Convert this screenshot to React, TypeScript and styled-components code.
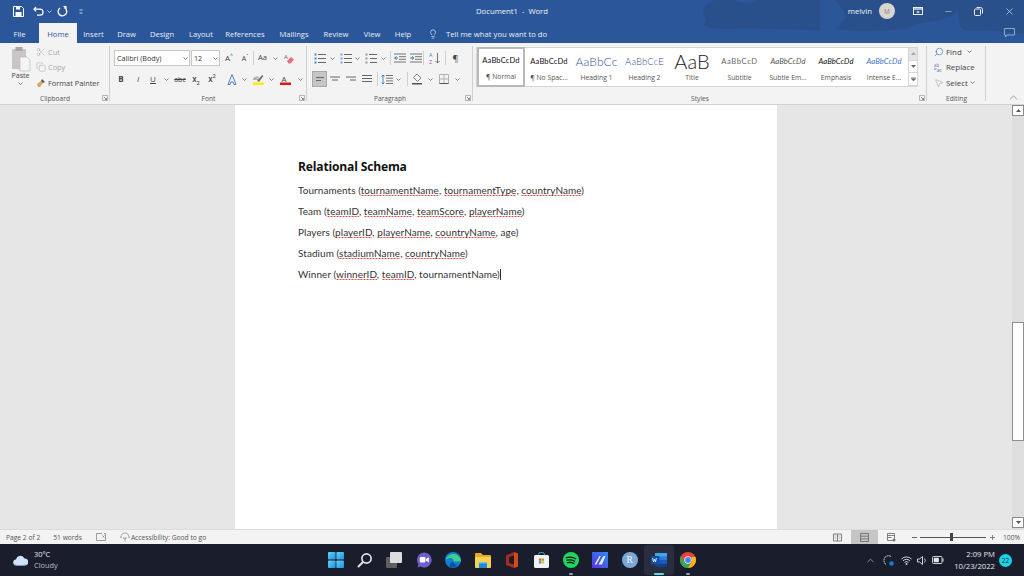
import React from "react";
import styled, { createGlobalStyle } from "styled-components";
import { Scissors, Copy, Search, Lightbulb, ChevronUp, X, Minus, MousePointer2 } from "lucide-react";

const Global = createGlobalStyle`
  html, body { margin: 0; padding: 0; width: 1024px; height: 576px; overflow: hidden; background: #e6e6e6; }
  * { box-sizing: border-box; }
  #root { width: 1024px; height: 576px; }
  svg { display: block; flex: none; }
`;
const Page = styled.div`
  width: 1024px; height: 576px; display: flex; flex-direction: column;
  font-family: "Open Sans", "Liberation Sans", sans-serif; color: #444;
`;
const Head = styled.header`
  position: relative; height: 43px; background: #2b579a; display: flex; flex-direction: column; flex: none; overflow: hidden;
`;
const Watermark = styled.svg`
  position: absolute; left: 0; top: 0; width: 1024px; height: 43px;
`;
const TitleBar = styled.div`
  position: relative; height: 22px; display: flex; align-items: center; color: #fff; flex: none;
`;
const Qat = styled.div`
  display: flex; align-items: center; width: 424px; padding-left: 12px;
`;
const Slot = styled.span<{ $w: number; $h?: number }>`
  width: ${p => p.$w}px; height: ${p => p.$h ?? 14}px; display: flex; align-items: center; justify-content: center; flex: none;
`;
const DocTitle = styled.div`
  width: 176px; text-align: center; font-size: 7.7px; color: #f0f3f8;
`;
const WinControls = styled.div`
  margin-left: auto; display: flex; align-items: center; height: 22px;
`;
const UserName = styled.span`
  font-size: 7.8px; color: #f0f3f8; margin-right: 7px;
`;
const Avatar = styled.span`
  width: 16px; height: 16px; border-radius: 50%; background: #d9d6d0; color: #7b8a80; font-size: 6.5px;
  display: flex; align-items: center; justify-content: center; margin-right: 17px;
`;
const TabRow = styled.nav`
  position: relative; height: 21px; display: flex; align-items: flex-end; flex: none;
`;
const Tab = styled.span<{ $w: number; $active?: boolean }>`
  width: ${p => p.$w}px; height: 20px; display: flex; align-items: center; justify-content: center;
  font-size: 7.6px; color: ${p => (p.$active ? "#2b579a" : "#e8edf5")};
  background: ${p => (p.$active ? "#f3f3f3" : "transparent")}; flex: none; padding-top: 2px;
`;
const TellMe = styled.span`
  display: flex; align-items: center; gap: 8px; font-size: 7.7px; color: #e8edf5; margin-left: 13px; height: 20px; padding-top: 2px;
`;
const CommentSlot = styled.span`
  margin-left: auto; margin-right: 9px; height: 20px; display: flex; align-items: center;
`;
const Ribbon = styled.section`
  height: 62px; background: #f3f3f3; border-bottom: 1px solid #d2d2d2; display: flex; flex: none; padding-top: 3px; position: relative;
`;
const Group = styled.div<{ $w: number }>`
  width: ${p => p.$w}px; height: 58px; flex: none; position: relative; display: flex; flex-direction: column;
  &::after { content: ""; position: absolute; right: 0; top: 0; bottom: 3px; width: 1px; background: #d0d0d0; }
`;
const GroupBody = styled.div`
  flex: 1; display: flex; min-height: 0;
`;
const GroupLabel = styled.div`
  height: 11px; font-size: 6.6px; color: #555; text-align: center; line-height: 11px; flex: none;
`;
const Launcher = styled.span`
  position: absolute; right: 2px; bottom: 3px;
`;
const PasteCol = styled.div`
  width: 35px; display: flex; flex-direction: column; align-items: center; padding-top: 1px; padding-left: 6px; font-size: 7px; color: #444;
`;
const PasteLabel = styled.span`
  line-height: 9px; margin-top: -1px;
`;
const ClipCol = styled.div`
  display: flex; flex-direction: column; margin-left: 1px; margin-top: -2px;
`;
const ClipRow = styled.div<{ $off?: boolean }>`
  height: 15.5px; display: flex; align-items: center; gap: 2px; font-size: 7.4px; color: ${p => (p.$off ? "#a9a9a9" : "#444")}; white-space: nowrap;
`;
const ToolCol = styled.div<{ $pad: number }>`
  display: flex; flex-direction: column; gap: 5px; padding-left: ${p => p.$pad}px; padding-top: 4px;
`;
const ToolRow = styled.div`
  height: 16px; display: flex; align-items: center;
`;
const Combo = styled.span<{ $w: number }>`
  width: ${p => p.$w}px; height: 16px; background: #fff; border: 1px solid #c6c6c6; display: flex; align-items: center;
  font-size: 7.2px; color: #333; padding-left: 2px; margin-right: 1px; flex: none; justify-content: space-between;
`;
const Glyph = styled.span<{ $weight?: number; $italic?: boolean; $under?: boolean; $size?: number; $strike?: boolean }>`
  font-size: ${p => p.$size ?? 8}px; font-weight: ${p => p.$weight ?? 400}; font-style: ${p => (p.$italic ? "italic" : "normal")};
  text-decoration: ${p => (p.$under ? "underline" : p.$strike ? "line-through" : "none")}; color: #444; line-height: 1; white-space: nowrap;
`;
const Sub = styled.sub`font-size: 5px; line-height: 0;`;
const Sup = styled.sup`font-size: 5px; line-height: 0;`;
const Sep = styled.span`
  width: 1px; height: 14px; background: #d0d0d0; flex: none;
`;
const Selected = styled.span`
  width: 15px; height: 16px; background: #c6c6c6; border: 1px solid #a8a8a8; display: flex; align-items: center; justify-content: center; flex: none;
`;
const Gallery = styled.div`
  margin: 1px 0 0 3px; width: 442px; height: 40px; background: #fff; border: 1px solid #d6d6d6; display: flex; position: relative;
`;
const StyleTile = styled.div<{ $first?: boolean; $w: number }>`
  width: ${p => p.$w}px; height: ${p => (p.$first ? 40 : 38)}px; display: flex; flex-direction: column; align-items: center; flex: none;
  border: ${p => (p.$first ? "2px solid #b9b9b9" : "none")}; margin: ${p => (p.$first ? "-1px 0 0 0" : "0")}; padding-top: ${p => (p.$first ? "1px" : "3px")};
`;
const Sample = styled.div<{ $color?: string; $size?: number; $italic?: boolean; $track?: number; $light?: boolean }>`
  height: 21px; line-height: 21px; white-space: nowrap;
  font-family: Lato, "Open Sans", sans-serif; font-size: ${p => p.$size ?? 7.6}px; color: ${p => p.$color ?? "#111"};
  font-style: ${p => (p.$italic ? "italic" : "normal")}; letter-spacing: ${p => p.$track ?? 0.1}px; font-weight: ${p => (p.$light ? 300 : 400)};
`;
const TileName = styled.div`
  font-size: 6.8px; color: #555; white-space: nowrap; line-height: 12px;
`;
const GalleryScroll = styled.div`
  width: 10px; height: 38px; margin-left: auto; display: flex; flex-direction: column; border-left: 1px solid #d6d6d6;
`;
const ScrollCell = styled.span<{ $off?: boolean }>`
  flex: 1; display: flex; align-items: center; justify-content: center; background: ${p => (p.$off ? "#e4e4e4" : "#fff")};
  border-bottom: 1px solid #d6d6d6;
`;
const EditCol = styled.div`
  display: flex; flex-direction: column; padding: 0 0 0 7px; margin-top: -2px;
`;
const EditRow = styled.div`
  height: 15.5px; display: flex; align-items: center; gap: 2px; font-size: 7.9px; color: #444; white-space: nowrap;
`;
const Collapse = styled.span`
  position: absolute; right: 4px; bottom: 0;
`;
const Main = styled.main`
  flex: 1; min-height: 0; display: flex; background: #e6e6e6; border-bottom: 1px solid #dcdcdc;
`;
const Canvas = styled.div`
  flex: 1; display: flex; padding-left: 235px;
`;
const Sheet = styled.article`
  width: 542px; background: #fff; padding: 54px 0 0 63px; font-family: Lato, Carlito, "Open Sans", sans-serif; color: #333;
`;
const DocHeading = styled.h1`
  margin: 0 0 5px; font-size: 12.1px; font-weight: 700; line-height: 16px; color: #111; font-family: "Open Sans", sans-serif; letter-spacing: -0.18px;
`;
const DocLine = styled.p`
  margin: 0; height: 21px; line-height: 21px; font-size: 9.95px; white-space: nowrap; letter-spacing: 0.08px;
`;
const Squiggle = styled.span`
  background-image:
    linear-gradient(45deg, transparent 36%, #dd4a50 36%, #dd4a50 64%, transparent 64%),
    linear-gradient(-45deg, transparent 36%, #dd4a50 36%, #dd4a50 64%, transparent 64%);
  background-size: 3px 1.5px;
  background-position: 0 100%, 1.5px 100%;
  background-repeat: repeat-x;
`;
const Caret = styled.span`
  display: inline-block; width: 1px; height: 11px; background: #333; vertical-align: -2px;
`;
const Scrollbar = styled.aside`
  width: 12px; background: #dedede; display: flex; flex-direction: column; align-items: stretch; flex: none; padding-bottom: 1px;
`;
const ScrollButton = styled.span`
  height: 11px; background: #fff; border: 1px solid #8a8a8a; display: flex; align-items: center; justify-content: center; flex: none;
`;
const ScrollGap = styled.span<{ $h?: number }>`
  ${p => (p.$h ? `height:${p.$h}px;flex:none;` : "flex:1;")}
`;
const Thumb = styled.span`
  height: 119px; background: #fff; border: 1px solid #8f8f8f; flex: none;
`;
const StatusBar = styled.footer`
  height: 14px; background: #f3f3f3; display: flex; align-items: center; font-size: 6.7px; color: #555; padding-left: 6px; flex: none;
`;
const StatusText = styled.span<{ $ml?: number }>`
  margin-left: ${p => p.$ml ?? 0}px; white-space: nowrap; display: flex; align-items: center; gap: 1px;
`;
const StatusRight = styled.div`
  margin-left: auto; display: flex; align-items: center; height: 14px; padding-right: 4px;
`;
const ViewBtn = styled.span<{ $on?: boolean }>`
  width: 27px; height: 14px; display: flex; align-items: center; justify-content: center; background: ${p => (p.$on ? "#c6c6c6" : "transparent")};
`;
const ZoomTrack = styled.span`
  width: 66px; height: 1px; background: #555; position: relative; margin: 0 3px; flex: none;
`;
const ZoomThumb = styled.span`
  position: absolute; left: 30px; top: -3.5px; width: 3px; height: 8px; background: #444;
`;
const ZoomPct = styled.span`
  margin-left: 8px; color: #555;
`;
const Taskbar = styled.footer`
  height: 32px; background: #1a1d2c; display: flex; align-items: center; flex: none; color: #eee;
`;
const Weather = styled.div`
  width: 321px; display: flex; align-items: center; padding-left: 13px; gap: 6px; flex: none;
`;
const WeatherText = styled.div`
  font-size: 7.4px; line-height: 11px; color: #e9e9ee; display: flex; flex-direction: column;
`;
const WeatherDim = styled.span`color: #b9bcc6;`;
const Apps = styled.div`
  display: flex; align-items: center; flex: none;
`;
const AppSlot = styled.span<{ $active?: boolean; $dot?: boolean }>`
  width: 29.4px; height: 30px; display: flex; align-items: center; justify-content: center; position: relative; border-radius: 3px;
  background: ${p => (p.$active ? "#2a2d3d" : "transparent")};
  &::after {
    content: ""; position: absolute; bottom: 0; left: 50%; transform: translateX(-50%); border-radius: 1px; height: 2px;
    width: ${p => (p.$active ? 10 : p.$dot ? 4 : 0)}px; background: ${p => (p.$active ? "#4fe3ee" : "#9a9ca6")};
  }
`;
const Tray = styled.div`
  margin-left: auto; display: flex; align-items: center; padding-right: 12px;
`;
const Clock = styled.div`
  font-size: 7.7px; line-height: 12px; text-align: right; color: #e6e6ea; margin-left: 8px;
`;
const Badge = styled.span`
  width: 13px; height: 13px; border-radius: 50%; background: #19d3ea; color: #123; font-size: 6.5px; display: flex; align-items: center; justify-content: center; margin-left: 4px;
`;

/* ---- drawn icons ---- */
const Chev = ({ c = "#666" }: { c?: string }) => (
  <svg width="5" height="3" viewBox="0 0 5 3"><path d="M.5.5 2.5 2.5 4.5.5" fill="none" stroke={c} strokeWidth=".8" /></svg>
);
const LauncherIcon = () => (
  <svg width="6" height="6" viewBox="0 0 6 6"><path d="M.5 5.5V.5h5v5z" fill="none" stroke="#999" strokeWidth=".7" /><path d="M2 2l2.5 2.5M4.5 3v1.5H3" fill="none" stroke="#666" strokeWidth=".7" /></svg>
);
const Lines = ({ d, c = "#666" }: { d: number[][]; c?: string }) => (
  <svg width="12" height="10" viewBox="0 0 12 10">
    {d.map(([a, b, y], i) => <path key={i} d={`M${a} ${y}H${b}`} stroke={c} strokeWidth="1" />)}
  </svg>
);
const ListIcon = ({ mark }: { mark: string }) => (
  <svg width="12" height="11" viewBox="0 0 12 11">
    {[1.5, 5.5, 9.5].map((y, i) => (
      <g key={i}>
        <rect x=".5" y={y - 1} width="2" height="2" fill={mark} />
        <path d={`M${i && mark === "#999" ? 5 : 4} ${y}H12`} stroke="#666" strokeWidth="1" />
      </g>
    ))}
  </svg>
);
const IndentIcon = ({ flip }: { flip?: boolean }) => (
  <svg width="12" height="10" viewBox="0 0 12 10">
    <path d="M0 1H12M5 3.7H12M5 6.3H12M0 9H12" stroke="#666" strokeWidth=".9" />
    <path d={flip ? "M0 5H3M2 3.5 4 5 2 6.5" : "M1 5H4M2.5 3.5 .5 5 2.5 6.5"} stroke="#2b6cb0" strokeWidth=".9" fill="none" />
  </svg>
);

const AppIcons = {
  win: (
    <svg width="16" height="16" viewBox="0 0 16 16">
      <defs><linearGradient id="w" x1="0" y1="0" x2="1" y2="1"><stop offset="0" stopColor="#5fd6fa" /><stop offset="1" stopColor="#1a8fdc" /></linearGradient></defs>
      <rect x="0" y="0" width="7.6" height="7.6" rx=".8" fill="url(#w)" /><rect x="8.4" y="0" width="7.6" height="7.6" rx=".8" fill="url(#w)" />
      <rect x="0" y="8.4" width="7.6" height="7.6" rx=".8" fill="url(#w)" /><rect x="8.4" y="8.4" width="7.6" height="7.6" rx=".8" fill="url(#w)" />
    </svg>
  ),
  search: (
    <svg width="16" height="16" viewBox="0 0 16 16"><circle cx="9.5" cy="6.5" r="4.6" fill="none" stroke="#e4e4e4" strokeWidth="1.7" /><path d="M6 10 1.5 14.5" stroke="#e4e4e4" strokeWidth="1.9" strokeLinecap="round" /></svg>
  ),
  taskview: (
    <svg width="16" height="16" viewBox="0 0 16 16"><rect x="0" y="5" width="11" height="11" rx="1" fill="#5f5f5f" /><rect x="4" y="0" width="12" height="11" rx="1" fill="#dcdcdc" /></svg>
  ),
  teams: (
    <svg width="16" height="16" viewBox="0 0 16 16"><path d="M8 .5a7.5 7.5 0 1 1-3.6 14L1.5 15.5l.9-3.2A7.5 7.5 0 0 1 8 .5z" fill="#6d5fd0" /><rect x="3.8" y="5" width="5.6" height="5.6" rx="1" fill="#fff" /><path d="M10 7l2.8-1.7v5L10 8.8z" fill="#fff" /></svg>
  ),
  edge: (
    <svg width="16" height="16" viewBox="0 0 16 16">
      <circle cx="8" cy="8" r="8" fill="#0f7fd0" />
      <path d="M1 8C2 3 7 1 11 2.500c3 1.200 5 4 4.900 7H8.500C9 6 5 4.500 1 8z" fill="#3ecf8e" />
      <path d="M8.500 9.500c-.5 2 1.500 3.800 4 3.300-1.500 2-4 3.200-6.500 3C3.500 15 5 10 8.500 9.500z" fill="#0a4fa0" />
    </svg>
  ),
  files: (
    <svg width="16" height="15" viewBox="0 0 16 15"><path d="M0 1a1 1 0 0 1 1-1h5l2 2h7a1 1 0 0 1 1 1v2H0z" fill="#e9a91e" /><rect x="0" y="4" width="16" height="11" rx="1" fill="#f7d154" /><rect x="4" y="9" width="8" height="6" fill="#1e88d2" /><rect x="4" y="9" width="8" height="1.500" fill="#67c3f2" /></svg>
  ),
  office: (
    <svg width="14" height="16" viewBox="0 0 14 16"><path d="M1 3.500 9 0l4 1.500v13L9 16l-8-3z" fill="#a92c18" /><path d="M4 5 9 3.500v9L4 11z" fill="#1a1d2c" /><path d="M9 0l4 1.500v13L9 16z" fill="#d24a1a" /></svg>
  ),
  store: (
    <svg width="15" height="16" viewBox="0 0 15 16"><path d="M4.500 4V2.500A2 2 0 0 1 6.500.5h2a2 2 0 0 1 2 2V4" fill="none" stroke="#2bb7c9" strokeWidth="1" /><rect x="0" y="3" width="15" height="13" rx="1.500" fill="#f2f2f2" /><rect x="5" y="6.500" width="2.300" height="2.300" fill="#e9502a" /><rect x="7.700" y="6.500" width="2.300" height="2.300" fill="#7cb82a" /><rect x="5" y="9.200" width="2.300" height="2.300" fill="#1a9fe0" /><rect x="7.700" y="9.200" width="2.300" height="2.300" fill="#f5b81f" /></svg>
  ),
  spotify: (
    <svg width="16" height="16" viewBox="0 0 16 16"><circle cx="8" cy="8" r="8" fill="#1ed760" /><path d="M3.300 5.700c3-.9 6.500-.6 9.300 1M3.800 8.200c2.600-.7 5.500-.4 7.900 1M4.300 10.600c2.200-.5 4.500-.3 6.500.8" fill="none" stroke="#121212" strokeWidth="1.300" strokeLinecap="round" /></svg>
  ),
  linear: (
    <svg width="16" height="16" viewBox="0 0 16 16"><defs><linearGradient id="m" x1="0" y1="1" x2="1" y2="0"><stop offset="0" stopColor="#5a2fe8" /><stop offset="1" stopColor="#2c8ff0" /></linearGradient></defs><rect width="16" height="16" fill="url(#m)" /><path d="M2.500 12.500 7.500 4h1.300L4.500 12.500zM6.500 12.500 11.500 4h2L10 12.500z" fill="#e8ecff" /></svg>
  ),
  word: (
    <svg width="16" height="14" viewBox="0 0 16 14"><rect x="4" y="0" width="12" height="14" rx="1" fill="#2b7cd3" /><rect x="4" y="0" width="12" height="3.500" fill="#41a5ee" /><rect x="4" y="7" width="12" height="3.500" fill="#185abd" /><rect x="4" y="10.500" width="12" height="3.500" fill="#103f91" /><rect x="0" y="3" width="8.500" height="8.500" rx="1" fill="#134fa8" /><path d="M1.600 5l.9 4 1-3 1 3 .9-4" fill="none" stroke="#fff" strokeWidth=".8" /></svg>
  ),
  chrome: (
    <svg width="16" height="16" viewBox="0 0 16 16"><circle cx="8" cy="8" r="8" fill="#ea4335" /><path d="M8 16A8 8 0 0 1 1 4l3.800 6.400L8 12l4-1-4 5z" fill="#34a853" /><path d="M15.300 4.800A8 8 0 0 1 8 16l4-6.500V5z" fill="#fbbc05" /><circle cx="8" cy="8" r="3.700" fill="#fff" /><circle cx="8" cy="8" r="2.900" fill="#4285f4" /></svg>
  ),
};

const RBadge = styled.span`
  width: 16px; height: 16px; border-radius: 50%; background: #7ba7d6; color: #eef4fb; font-family: "Liberation Serif", serif; font-size: 9.500px;
  display: flex; align-items: center; justify-content: center;
`;

const tabs: [string, number, boolean?][] = [
  ["File", 39], ["Home", 38, true], ["Insert", 33], ["Draw", 33], ["Design", 38], ["Layout", 40], ["References", 48], ["Mailings", 50], ["Review", 34], ["View", 38], ["Help", 24],
];

const tiles: { s: string; n: string; w: number; color?: string; size?: number; italic?: boolean; track?: number; light?: boolean; first?: boolean }[] = [
  { s: "AaBbCcDd", n: "¶ Normal", w: 48, first: true },
  { s: "AaBbCcDd", n: "¶ No Spac...", w: 48 },
  { s: "AaBbCc", n: "Heading 1", w: 47, color: "#2f5496", size: 12, light: true },
  { s: "AaBbCcE", n: "Heading 2", w: 49, color: "#2f5496", size: 9.500, light: true },
  { s: "AaB", n: "Title", w: 46, size: 20, color: "#222", light: true },
  { s: "AaBbCcD", n: "Subtitle", w: 49, color: "#666", track: 0.6 },
  { s: "AaBbCcDd", n: "Subtle Em...", w: 48, color: "#555", italic: true },
  { s: "AaBbCcDd", n: "Emphasis", w: 48, italic: true },
  { s: "AaBbCcDd", n: "Intense E...", w: 48, color: "#4472c4", italic: true },
];

export default function App() {
  return (
    <Page>
      <Global />
      <Head>
        <Watermark viewBox="0 0 1024 43">
          <path d="M703 14c0-9 6-14 16-14h16c6 4 14 3 22 0h63v31l-30-2c-20 0-40-1-60 0-8 0-20 0-27-4 3-3 4-6 0-11z" fill="#2a508c" />
          <path d="M835 0h105c24 0 54-2 84 0v33c-18 0-40-4-58-2-8-3-7-13-8-20-12 14-40 8-52 18-20 2-50 4-72 0 6-4 12-8 11-16z" fill="#2a508c" />
        </Watermark>
        <TitleBar>
          <Qat>
            <Slot $w={13}>
              <svg width="11" height="11" viewBox="0 0 11 11"><path d="M.5.500h8l2 2v8h-10z" fill="none" stroke="#fff" strokeWidth="1" /><rect x="3" y="1" width="4" height="2.500" fill="#fff" /><rect x="2.500" y="6" width="6" height="4" fill="#fff" /></svg>
            </Slot>
            <Slot $w={14} style={{ marginLeft: 6 }}>
              <svg width="11" height="10" viewBox="0 0 11 10"><path d="M3 1 1 3.200 3 5.400M1 3.200h6a3 3 0 0 1 0 6H4" fill="none" stroke="#fff" strokeWidth="1.200" /></svg>
            </Slot>
            <Slot $w={6} style={{ marginLeft: 1 }}><Chev c="#dfe6f2" /></Slot>
            <Slot $w={14} style={{ marginLeft: 3 }}>
              <svg width="11" height="11" viewBox="0 0 11 11"><path d="M7.500 1.800A4.300 4.300 0 1 1 3 2" fill="none" stroke="#fff" strokeWidth="1.300" /><path d="M6 0h3.500v3.500z" fill="#fff" /></svg>
            </Slot>
            <Slot $w={5} style={{ marginLeft: 9 }}>
              <svg width="4" height="5" viewBox="0 0 4 5"><path d="M.5 1h3M.5 4h3" stroke="#dfe6f2" strokeWidth=".9" /></svg>
            </Slot>
          </Qat>
          <DocTitle>Document1&nbsp; -&nbsp; Word</DocTitle>
          <WinControls>
            <UserName>melvin</UserName>
            <Avatar>M</Avatar>
            <Slot $w={12}>
              <svg width="10" height="8" viewBox="0 0 10 8"><rect x=".5" y=".5" width="9" height="7" fill="none" stroke="#fff" strokeWidth=".9" /><path d="M.5 2h9" stroke="#fff" strokeWidth="1.200" /><path d="M3.500 5h3M5 3.800V6.200" stroke="#fff" strokeWidth=".8" /></svg>
            </Slot>
            <Slot $w={30} style={{ marginLeft: 9 }}><Minus size={9} color="#fff" strokeWidth={1.200} /></Slot>
            <Slot $w={31}>
              <svg width="9" height="9" viewBox="0 0 9 9"><rect x=".5" y="2" width="6" height="6.500" rx="1" fill="none" stroke="#fff" strokeWidth=".9" /><path d="M2.500.500h4a2 2 0 0 1 2 2v4" fill="none" stroke="#fff" strokeWidth=".9" /></svg>
            </Slot>
            <Slot $w={30}><X size={11} color="#fff" strokeWidth={1.200} /></Slot>
          </WinControls>
        </TitleBar>
        <TabRow>
          {tabs.map(([t, w, a]) => <Tab key={t} $w={w} $active={a}>{t}</Tab>)}
          <TellMe>
            <Lightbulb size={10} color="#fff" strokeWidth={1.400} />
            Tell me what you want to do
          </TellMe>
          <CommentSlot>
            <svg width="11" height="10" viewBox="0 0 11 10"><path d="M.5.500h10v6.500H3L1.500 9V7H.5z" fill="none" stroke="#a8bbd6" strokeWidth=".8" /></svg>
          </CommentSlot>
        </TabRow>
      </Head>

      <Ribbon>
        <Group $w={110}>
          <GroupBody>
            <PasteCol>
              <svg width="20" height="25" viewBox="0 0 20 25">
                <rect x="1" y="2" width="14" height="20" rx="1" fill="#c9c5c5" />
                <rect x="4.500" y="0" width="7" height="4" fill="#a9a5a5" />
                <path d="M9 10h7l3 3v11H9z" fill="#f4f4f4" stroke="#bbb" strokeWidth=".7" />
              </svg>
              <PasteLabel>Paste</PasteLabel>
              <Slot $w={12} $h={6}><Chev /></Slot>
            </PasteCol>
            <ClipCol>
              <ClipRow $off><Scissors size={10} color="#a9a9a9" strokeWidth={1.200} />Cut</ClipRow>
              <ClipRow $off><Copy size={10} color="#a9a9a9" strokeWidth={1.200} />Copy</ClipRow>
              <ClipRow>
                <svg width="10" height="10" viewBox="0 0 10 10"><path d="M1 6 5 3l2 2-3 4H2z" fill="#d9a860" /><path d="M6 1l3 3-2 1-2-2z" fill="#555" /></svg>
                Format Painter
              </ClipRow>
            </ClipCol>
          </GroupBody>
          <GroupLabel>Clipboard</GroupLabel>
          <Launcher><LauncherIcon /></Launcher>
        </Group>

        <Group $w={197}>
          <GroupBody>
            <ToolCol $pad={4}>
              <ToolRow>
                <Combo $w={76}>Calibri (Body)<Slot $w={8}><Chev /></Slot></Combo>
                <Combo $w={29}>12<Slot $w={8}><Chev /></Slot></Combo>
                <Slot $w={16}><Glyph $size={8}>A<Sup>^</Sup></Glyph></Slot>
                <Slot $w={16}><Glyph $size={7}>A<Sup>ˇ</Sup></Glyph></Slot>
                <Sep />
                <Slot $w={17}><Glyph $size={7.500}>Aa</Glyph></Slot>
                <Slot $w={8}><Chev /></Slot>
                <Slot $w={20}>
                  <svg width="11" height="11" viewBox="0 0 11 11"><text x="0" y="6" fontSize="6" fill="#666" fontFamily="Open Sans">A</text><path d="M3 8 7 4l3 2.500-3.500 4H4.500z" fill="#e96a85" /></svg>
                </Slot>
              </ToolRow>
              <ToolRow>
                <Slot $w={14}><Glyph $weight={700}>B</Glyph></Slot>
                <Slot $w={20}><Glyph $italic>I</Glyph></Slot>
                <Slot $w={10}><Glyph $under>U</Glyph></Slot>
                <Slot $w={16}><Chev /></Slot>
                <Slot $w={12}><Glyph $size={7} $strike>abc</Glyph></Slot>
                <Slot $w={20}><Glyph $weight={600}>x<Sub>2</Sub></Glyph></Slot>
                <Slot $w={12}><Glyph $weight={600}>x<Sup>2</Sup></Glyph></Slot>
                <Slot $w={16} style={{ marginLeft: 6 }}>
                  <svg width="10" height="11" viewBox="0 0 10 11"><path d="M5 .500 1 10.500h2l.8-2.500h2.400L7 10.500h2z" fill="none" stroke="#4a86c8" strokeWidth="1" /></svg>
                </Slot>
                <Slot $w={8}><Chev /></Slot>
                <Slot $w={20}>
                  <svg width="11" height="11" viewBox="0 0 11 11"><text x="0" y="6" fontSize="5.500" fill="#666" fontFamily="Open Sans">ab</text><path d="M4 7 9 1l1.500 1L6 8z" fill="#777" /><rect x="0" y="8.500" width="11" height="2.500" fill="#ffee00" /></svg>
                </Slot>
                <Slot $w={6}><Chev /></Slot>
                <Slot $w={22}>
                  <svg width="11" height="11" viewBox="0 0 11 11"><text x="1.500" y="7.500" fontSize="8" fill="#444" fontFamily="Open Sans">A</text><rect x="0" y="8.500" width="11" height="2.500" fill="#e81414" /></svg>
                </Slot>
                <Slot $w={8}><Chev /></Slot>
              </ToolRow>
            </ToolCol>
          </GroupBody>
          <GroupLabel>Font</GroupLabel>
          <Launcher><LauncherIcon /></Launcher>
        </Group>

        <Group $w={166}>
          <GroupBody>
            <ToolCol $pad={5}>
              <ToolRow>
                <Slot $w={15}><ListIcon mark="#4a86c8" /></Slot>
                <Slot $w={11}><Chev /></Slot>
                <Slot $w={15}><ListIcon mark="#7aa6d6" /></Slot>
                <Slot $w={9}><Chev /></Slot>
                <Slot $w={17}><ListIcon mark="#999" /></Slot>
                <Slot $w={8}><Chev /></Slot>
                <Sep style={{ marginLeft: 3 }} />
                <Slot $w={17}><IndentIcon /></Slot>
                <Slot $w={15}><IndentIcon flip /></Slot>
                <Sep />
                <Slot $w={21}>
                  <svg width="12" height="12" viewBox="0 0 12 12"><text x="0" y="5" fontSize="5.500" fill="#4a86c8" fontFamily="Open Sans">A</text><text x="0" y="11.500" fontSize="5.500" fill="#9b59b6" fontFamily="Open Sans">Z</text><path d="M8.500 1v10M6.500 9l2 2 2-2" fill="none" stroke="#666" strokeWidth=".9" /></svg>
                </Slot>
                <Sep />
                <Slot $w={19}><Glyph $size={9}>¶</Glyph></Slot>
              </ToolRow>
              <ToolRow>
                <Selected><Lines d={[[2, 10, 3.500], [2, 7, 6.500]]} /></Selected>
                <Slot $w={16}><Lines d={[[1, 11, 3], [3, 9, 6]]} /></Slot>
                <Slot $w={16}><Lines d={[[1, 11, 3], [5, 11, 6]]} /></Slot>
                <Slot $w={16}><Lines d={[[1, 11, 1.500], [1, 11, 4.500], [1, 11, 7.500]]} /></Slot>
                <Sep style={{ marginLeft: 2 }} />
                <Slot $w={18}>
                  <svg width="12" height="11" viewBox="0 0 12 11"><path d="M5 1.500h7M5 4.200h7M5 6.900h7M5 9.500h7" stroke="#666" strokeWidth=".9" /><path d="M2 1v9M.5 2.500 2 1l1.500 1.500M.5 8.500 2 10l1.500-1.500" fill="none" stroke="#2b6cb0" strokeWidth=".8" /></svg>
                </Slot>
                <Slot $w={5}><Chev /></Slot>
                <Sep style={{ marginLeft: 6 }} />
                <Slot $w={18}>
                  <svg width="12" height="12" viewBox="0 0 12 12"><path d="M6 1l4 4-3.500 3.500-4-4z" fill="none" stroke="#777" strokeWidth=".9" /><rect x="1" y="10" width="10" height="1.500" fill="#555" /></svg>
                </Slot>
                <Slot $w={8}><Chev /></Slot>
                <Slot $w={20}>
                  <svg width="10" height="10" viewBox="0 0 10 10"><path d="M.5.500h9v9h-9zM5 .5v9M.5 5h9" fill="none" stroke="#aaa" strokeWidth=".9" /><path d="M.5 9.500h9" stroke="#555" strokeWidth="1" /></svg>
                </Slot>
                <Slot $w={6}><Chev /></Slot>
              </ToolRow>
            </ToolCol>
          </GroupBody>
          <GroupLabel>Paragraph</GroupLabel>
          <Launcher><LauncherIcon /></Launcher>
        </Group>

        <Group $w={454}>
          <GroupBody>
            <Gallery>
              {tiles.map((t, i) => (
                <StyleTile key={i} $first={t.first} $w={t.w}>
                  <Sample $color={t.color} $size={t.size} $italic={t.italic} $track={t.track} $light={t.light}>{t.s}</Sample>
                  <TileName>{t.n}</TileName>
                </StyleTile>
              ))}
              <GalleryScroll>
                <ScrollCell $off><svg width="5" height="3" viewBox="0 0 5 3"><path d="M0 3 2.500 0 5 3z" fill="#aaa" /></svg></ScrollCell>
                <ScrollCell><svg width="5" height="3" viewBox="0 0 5 3"><path d="M0 0 2.500 3 5 0z" fill="#666" /></svg></ScrollCell>
                <ScrollCell><svg width="5" height="4" viewBox="0 0 5 4"><path d="M0 .5h5M0 1.500 2.500 4 5 1.500z" fill="#666" stroke="#666" strokeWidth=".4" /></svg></ScrollCell>
              </GalleryScroll>
            </Gallery>
          </GroupBody>
          <GroupLabel>Styles</GroupLabel>
          <Launcher><LauncherIcon /></Launcher>
        </Group>

        <Group $w={59}>
          <GroupBody>
            <EditCol>
              <EditRow><Search size={10} color="#2b6cb0" strokeWidth={1.400} style={{ transform: "scaleX(-1)" }} />Find<Slot $w={12}><Chev /></Slot></EditRow>
              <EditRow>
                <svg width="10" height="10" viewBox="0 0 10 10"><text x="0" y="4.500" fontSize="4.500" fill="#8e5bb5" fontFamily="Open Sans">ab</text><text x="3" y="9.500" fontSize="4.500" fill="#2b6cb0" fontFamily="Open Sans">ac</text><path d="M0 7h2.500" stroke="#2b6cb0" strokeWidth=".8" /></svg>
                Replace
              </EditRow>
              <EditRow><MousePointer2 size={10} color="#888" strokeWidth={1} />Select<Slot $w={5}><Chev /></Slot></EditRow>
            </EditCol>
          </GroupBody>
          <GroupLabel>Editing</GroupLabel>
        </Group>
        <Collapse><ChevronUp size={13} color="#555" strokeWidth={1} /></Collapse>
      </Ribbon>

      <Main>
        <Canvas>
          <Sheet>
            <DocHeading>Relational Schema</DocHeading>
            <DocLine>Tournaments (<Squiggle>tournamentName</Squiggle>, <Squiggle>tournamentType</Squiggle>, <Squiggle>countryName</Squiggle>)</DocLine>
            <DocLine>Team (<Squiggle>teamID</Squiggle>, <Squiggle>teamName</Squiggle>, <Squiggle>teamScore</Squiggle>, <Squiggle>playerName</Squiggle>)</DocLine>
            <DocLine>Players (<Squiggle>playerID</Squiggle>, <Squiggle>playerName</Squiggle>, <Squiggle>countryName</Squiggle>, age)</DocLine>
            <DocLine>Stadium (<Squiggle>stadiumName</Squiggle>, <Squiggle>countryName</Squiggle>)</DocLine>
            <DocLine>Winner (<Squiggle>winnerID</Squiggle>, <Squiggle>teamID</Squiggle>, tournamentName)<Caret /></DocLine>
          </Sheet>
        </Canvas>
        <Scrollbar>
          <ScrollButton><svg width="5" height="3" viewBox="0 0 5 3"><path d="M0 3 2.500 0 5 3z" fill="#555" /></svg></ScrollButton>
          <ScrollGap $h={206} />
          <Thumb />
          <ScrollGap />
          <ScrollButton><svg width="5" height="3" viewBox="0 0 5 3"><path d="M0 0 2.500 3 5 0z" fill="#555" /></svg></ScrollButton>
        </Scrollbar>
      </Main>

      <StatusBar>
        <StatusText>Page 2 of 2</StatusText>
        <StatusText $ml={13}>51 words</StatusText>
        <StatusText $ml={14}>
          <svg width="10" height="8" viewBox="0 0 10 8"><path d="M6 .5H.5v7h9V.5H8M5 7.500" fill="none" stroke="#777" strokeWidth=".7" /><path d="M6.500 2.500l2 2M8.500 2.500l-2 2" stroke="#777" strokeWidth=".7" /></svg>
        </StatusText>
        <StatusText $ml={14}>
          <svg width="10" height="10" viewBox="0 0 10 10"><path d="M1 5A4 4 0 0 1 9 5M5 6.500v3M3 6h4M1 5v1M9 5v1" fill="none" stroke="#666" strokeWidth=".8" strokeDasharray="1.500 .6" /></svg>
          Accessibility: Good to go
        </StatusText>
        <StatusRight>
          <ViewBtn>
            <svg width="9" height="9" viewBox="0 0 9 9"><path d="M.5 1h8v7h-8zM4.500 1v7" fill="none" stroke="#666" strokeWidth=".8" /><path d="M1.500 3h2M1.500 5h2M5.500 3h2M5.500 5h2" stroke="#999" strokeWidth=".6" /></svg>
          </ViewBtn>
          <ViewBtn $on>
            <svg width="9" height="9" viewBox="0 0 9 9"><path d="M.5.500h8v8h-8zM.5 3.200h8M.5 5.900h8" fill="none" stroke="#666" strokeWidth=".8" /></svg>
          </ViewBtn>
          <ViewBtn>
            <svg width="9" height="9" viewBox="0 0 9 9"><path d="M.5.500h7v7h-7zM.5 2.500h7M.5 4.500h4" fill="none" stroke="#666" strokeWidth=".8" /><circle cx="7" cy="7" r="1.500" fill="#777" /></svg>
          </ViewBtn>
          <Slot $w={6} $h={8} style={{ marginLeft: 6 }}><svg width="5" height="1" viewBox="0 0 5 1"><path d="M0 .5h5" stroke="#666" /></svg></Slot>
          <ZoomTrack><ZoomThumb /></ZoomTrack>
          <Slot $w={6} $h={8}><svg width="5" height="5" viewBox="0 0 5 5"><path d="M0 2.500h5M2.500 0v5" stroke="#666" strokeWidth=".8" /></svg></Slot>
          <ZoomPct>100%</ZoomPct>
        </StatusRight>
      </StatusBar>

      <Taskbar>
        <Weather>
          <svg width="15" height="11" viewBox="0 0 15 11"><path d="M3.500 10.500a3 3 0 0 1-.5-6A4.500 4.500 0 0 1 11.500 3.500 3.500 3.500 0 0 1 12 10.500z" fill="#cfe1fb" /><path d="M1 8.500c3 2 9 2 13 0-.6 1.500-1.500 2-3 2H3.500C2.500 10.500 1.500 9.800 1 8.500z" fill="#8ab4ee" /></svg>
          <WeatherText>
            <span>30°C</span>
            <WeatherDim>Cloudy</WeatherDim>
          </WeatherText>
        </Weather>
        <Apps>
          <AppSlot>{AppIcons.win}</AppSlot>
          <AppSlot>{AppIcons.search}</AppSlot>
          <AppSlot>{AppIcons.taskview}</AppSlot>
          <AppSlot>{AppIcons.teams}</AppSlot>
          <AppSlot>{AppIcons.edge}</AppSlot>
          <AppSlot>{AppIcons.files}</AppSlot>
          <AppSlot>{AppIcons.office}</AppSlot>
          <AppSlot>{AppIcons.store}</AppSlot>
          <AppSlot $dot>{AppIcons.spotify}</AppSlot>
          <AppSlot>{AppIcons.linear}</AppSlot>
          <AppSlot><RBadge>R</RBadge></AppSlot>
          <AppSlot $active>{AppIcons.word}</AppSlot>
          <AppSlot $dot>{AppIcons.chrome}</AppSlot>
        </Apps>
        <Tray>
          <Slot $w={18}><ChevronUp size={11} color="#e6e6ea" strokeWidth={1.200} /></Slot>
          <Slot $w={18}>
            <svg width="11" height="11" viewBox="0 0 11 11"><path d="M8 1.500A4.500 4.500 0 0 0 1 5.500M3 9.500A4.500 4.500 0 0 1 1 6" fill="none" stroke="#e6e6ea" strokeWidth=".9" strokeDasharray="2 .6" /><circle cx="8.500" cy="8.500" r="2.300" fill="#1779e0" /></svg>
          </Slot>
          <Slot $w={18}>
            <svg width="11" height="9" viewBox="0 0 11 9"><path d="M.5 3a7 7 0 0 1 10 0M2 4.800a5 5 0 0 1 7 0M3.500 6.400a3 3 0 0 1 4 0" fill="none" stroke="#e6e6ea" strokeWidth=".9" /><circle cx="5.500" cy="8" r=".9" fill="#e6e6ea" /></svg>
          </Slot>
          <Slot $w={15}>
            <svg width="11" height="9" viewBox="0 0 11 9"><path d="M.5 3h2L5.500.5v8L2.500 6h-2z" fill="none" stroke="#e6e6ea" strokeWidth=".9" /><path d="M7.500 2.500a3 3 0 0 1 0 4" fill="none" stroke="#e6e6ea" strokeWidth=".8" /></svg>
          </Slot>
          <Slot $w={16}>
            <svg width="12" height="8" viewBox="0 0 12 8"><rect x=".5" y=".5" width="9.500" height="7" rx="1" fill="none" stroke="#e6e6ea" strokeWidth=".9" /><rect x="1.800" y="1.800" width="5" height="4.400" fill="#e6e6ea" /><path d="M11 2.500v3" stroke="#e6e6ea" /></svg>
          </Slot>
          <Clock>2:09 PM<br />10/23/2022</Clock>
          <Badge>22</Badge>
        </Tray>
      </Taskbar>
    </Page>
  );
}
